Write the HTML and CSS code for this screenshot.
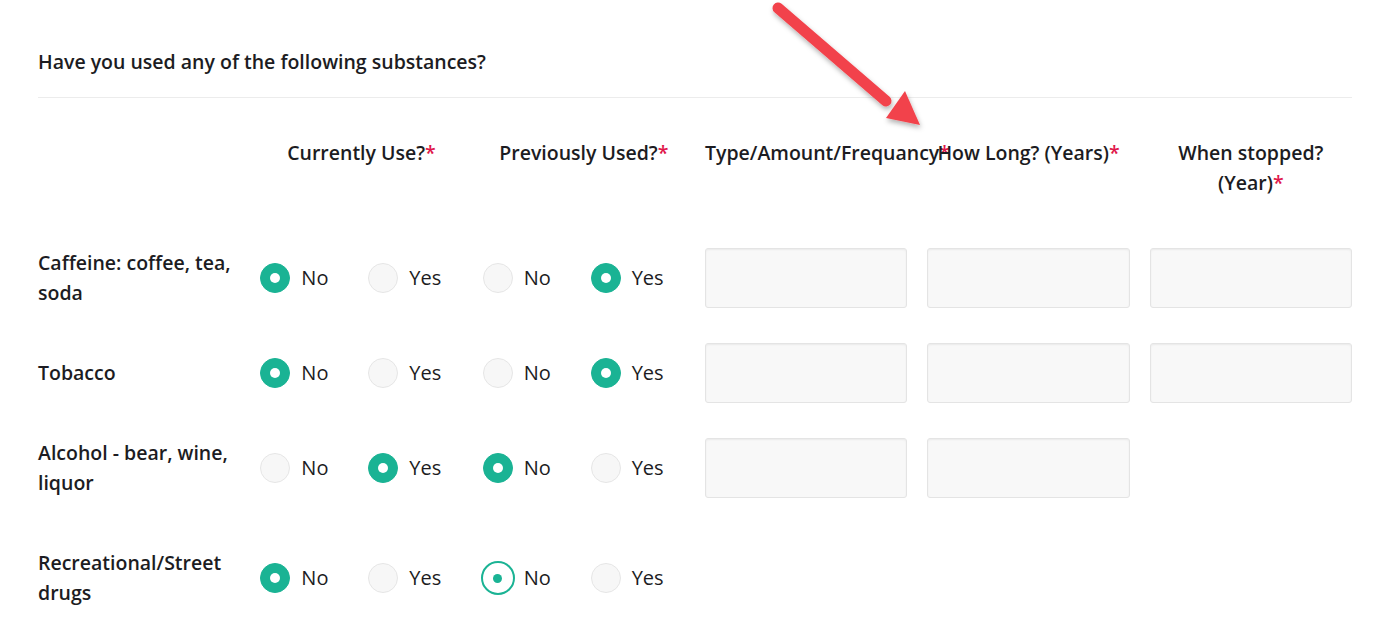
FILE: index.html
```html
<!DOCTYPE html>
<html>
<head>
<meta charset="utf-8">
<title>Substances</title>
<link rel="stylesheet" href="styles.css">
</head>
<body>
<div class="page">
  <h2 class="question">Have you used any of the following substances?</h2>

  <div class="row header">
    <div></div>
    <div class="col-title">Currently Use?<span class="req">*</span></div>
    <div class="col-title">Previously Used?<span class="req">*</span></div>
    <div class="col-title nowrap">Type/Amount/Frequancy<span class="req">*</span></div>
    <div class="col-title">How Long? (Years)<span class="req">*</span></div>
    <div class="col-title">When stopped? (Year)<span class="req">*</span></div>
  </div>

  <div class="row">
    <div class="label">Caffeine: coffee, tea, soda</div>
    <div class="choices"><span class="opt"><span class="radio on"></span>No</span><span class="opt"><span class="radio"></span>Yes</span></div>
    <div class="choices"><span class="opt"><span class="radio"></span>No</span><span class="opt"><span class="radio on"></span>Yes</span></div>
    <div class="field"></div>
    <div class="field"></div>
    <div class="field"></div>
  </div>

  <div class="row">
    <div class="label">Tobacco</div>
    <div class="choices"><span class="opt"><span class="radio on"></span>No</span><span class="opt"><span class="radio"></span>Yes</span></div>
    <div class="choices"><span class="opt"><span class="radio"></span>No</span><span class="opt"><span class="radio on"></span>Yes</span></div>
    <div class="field"></div>
    <div class="field"></div>
    <div class="field"></div>
  </div>

  <div class="row">
    <div class="label">Alcohol - bear, wine, liquor</div>
    <div class="choices"><span class="opt"><span class="radio"></span>No</span><span class="opt"><span class="radio on"></span>Yes</span></div>
    <div class="choices"><span class="opt"><span class="radio on"></span>No</span><span class="opt"><span class="radio"></span>Yes</span></div>
    <div class="field"></div>
    <div class="field"></div>
    <div></div>
  </div>

  <div class="row last">
    <div class="label">Recreational/Street drugs</div>
    <div class="choices"><span class="opt"><span class="radio on"></span>No</span><span class="opt"><span class="radio"></span>Yes</span></div>
    <div class="choices"><span class="opt"><span class="radio focus"></span>No</span><span class="opt"><span class="radio"></span>Yes</span></div>
    <div></div>
    <div></div>
    <div></div>
  </div>
</div>

<svg class="arrow" width="200" height="150" viewBox="0 0 200 150">
  <defs>
    <filter id="sh" x="-20%" y="-20%" width="140%" height="140%">
      <feDropShadow dx="1" dy="3" stdDeviation="2.5" flood-color="#000" flood-opacity="0.3"/>
    </filter>
  </defs>
  <g filter="url(#sh)">
    <line x1="18" y1="8" x2="126" y2="101" stroke="#f2434b" stroke-width="11" stroke-linecap="round"/>
    <polygon points="160,125 145,91 126,118" fill="#f2434b"/>
  </g>
</svg>
</body>
</html>
```

FILE: styles.css
```css
html, body {
  margin: 0;
  padding: 0;
  background: #ffffff;
}

body {
  font-family: "Open Sans", "Liberation Sans", sans-serif;
  color: #1c1c22;
  font-size: 20px;
}

.page {
  width: 1314px;
  padding: 0 30px 0 38px;
}

.question {
  margin: 48px 0 0 0;
  padding-bottom: 21px;
  font-size: 19.5px;
  line-height: 28px;
  font-weight: 600;
  border-bottom: 1px solid #ececec;
}

.row {
  display: grid;
  grid-template-columns: repeat(6, minmax(0, 1fr));
  column-gap: 20px;
  align-items: center;
  min-height: 60px;
  margin-bottom: 35px;
}

.row.header {
  margin-top: 40px;
  margin-bottom: 50px;
  align-items: start;
}

.row.last {
  margin-top: 50px;
}

.col-title {
  text-align: center;
  font-size: 19.5px;
  font-weight: 600;
  line-height: 30px;
}

.col-title.nowrap {
  white-space: nowrap;
}

.req {
  color: #e0174a;
}

.label {
  font-size: 19.5px;
  font-weight: 600;
  line-height: 30px;
  padding-right: 6px;
}

.choices {
  display: grid;
  grid-template-columns: 108px auto;
  align-items: center;
}

.opt {
  display: flex;
  align-items: center;
  gap: 11px;
  font-weight: 400;
  line-height: 30px;
}

.radio {
  box-sizing: border-box;
  width: 30px;
  height: 30px;
  border-radius: 50%;
  background: #f7f7f7;
  border: 1px solid #e6e6e6;
  display: flex;
  align-items: center;
  justify-content: center;
  flex: none;
}

.radio.on {
  background: #1ab394;
  border-color: #1ab394;
}

.radio.on::after {
  content: "";
  width: 10px;
  height: 10px;
  border-radius: 50%;
  background: #ffffff;
}

.radio.focus {
  background: #ffffff;
  border: 2px solid #1ab394;
  width: 34px;
  height: 34px;
  margin: -2px;
}

.radio.focus::after {
  content: "";
  width: 9px;
  height: 9px;
  border-radius: 50%;
  background: #1ab394;
}

.field {
  box-sizing: border-box;
  height: 60px;
  background: #f8f8f8;
  border: 1px solid #e4e4e4;
  border-radius: 3px;
  box-shadow: inset 0 1px 2px rgba(0, 0, 0, 0.06);
}

.arrow {
  position: absolute;
  left: 760px;
  top: 0;
  overflow: visible;
}
```
